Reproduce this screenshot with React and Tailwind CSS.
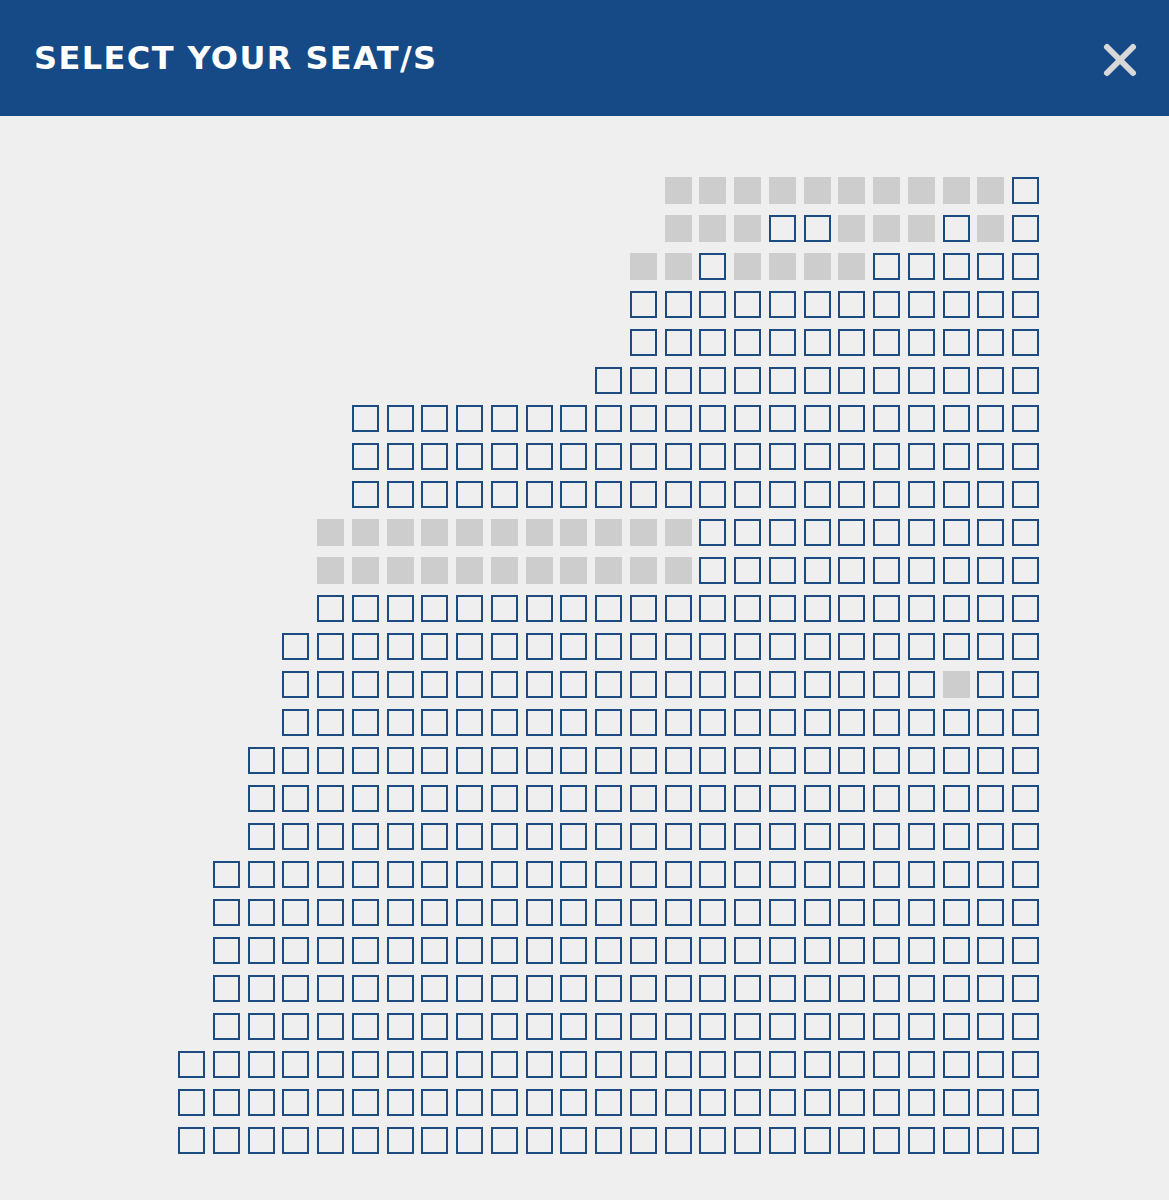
import React from "react";

const starts = [14,14,13,13,13,12,5,5,5,4,4,4,3,3,3,2,2,2,1,1,1,1,1,0,0,0];
const range = (a, b) => Array.from({ length: b - a + 1 }, (_, i) => a + i);
const grey = {
  0: range(14, 23),
  1: [14, 15, 16, 19, 20, 21, 23],
  2: [13, 14, 16, 17, 18, 19],
  9: range(4, 14),
  10: range(4, 14),
  13: [22],
};

export default function App() {
  const cells = [];
  starts.forEach((s, r) => {
    for (let c = 0; c < 25; c++) {
      let cls = "w-[27px] h-[27px]";
      if (c >= s) {
        if (grey[r] && grey[r].includes(c)) cls += " bg-[#cdcdcd]";
        else cls += " border-2 border-[#1d4a80] cursor-pointer";
      }
      cells.push(<div key={`${r}-${c}`} className={cls} />);
    }
  });
  return (
    <div className="w-[1169px] h-[1200px] bg-[#efefef]" style={{ fontFamily: "'DejaVu Sans', 'Liberation Sans', sans-serif" }}>
      <div className="h-[116px] bg-[#154a86] flex items-center justify-between pl-[34px] pr-[31px]">
        <h1 className="text-white text-[32px] font-bold tracking-[1.4px] leading-none pb-[1px]">SELECT YOUR SEAT/S</h1>
        <svg width="36" height="36" viewBox="0 0 36 36" className="mt-[3px]">
          <path d="M5 5 L31 31 M31 5 L5 31" stroke="#d8d8d8" strokeWidth="6" strokeLinecap="round" />
        </svg>
      </div>
      <div className="pt-[61px] pl-[178px]">
        <div className="grid grid-cols-[repeat(25,27px)] gap-x-[7.75px] gap-y-[11px]">
          {cells}
        </div>
      </div>
    </div>
  );
}
